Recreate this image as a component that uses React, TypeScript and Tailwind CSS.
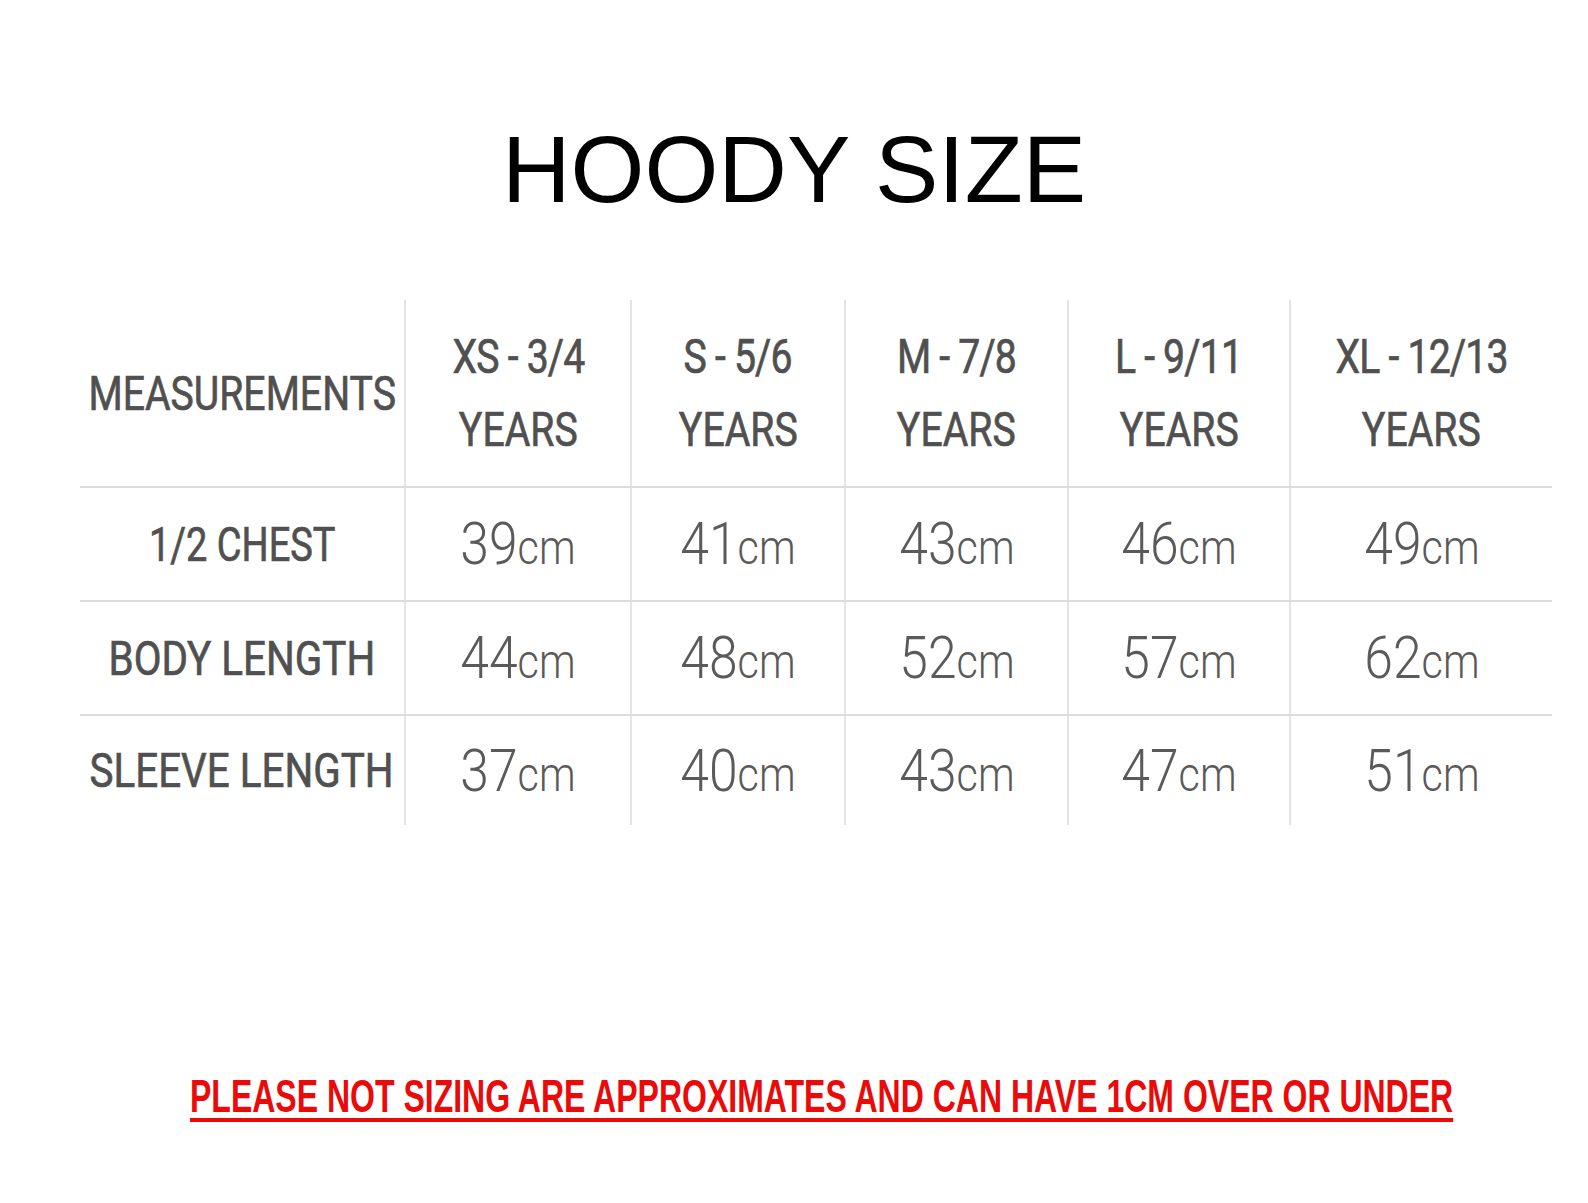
import React from "react";

const sizes: [string, string][] = [
  ["XS - 3/4", "YEARS"],
  ["S - 5/6", "YEARS"],
  ["M - 7/8", "YEARS"],
  ["L - 9/11", "YEARS"],
  ["XL - 12/13", "YEARS"],
];

const rows: { label: string; values: string[]; h: string; narrow: boolean }[] = [
  { label: "1/2 CHEST", values: ["39", "41", "43", "46", "49"], h: "h-[114px]", narrow: true },
  { label: "BODY LENGTH", values: ["44", "48", "52", "57", "62"], h: "h-[114px]", narrow: false },
  { label: "SLEEVE LENGTH", values: ["37", "40", "43", "47", "51"], h: "h-[111px]", narrow: false },
];

const colW = ["w-[226px]", "w-[214px]", "w-[223px]", "w-[222px]", "w-[263px]"];

function HeadText({ children }: { children: React.ReactNode }) {
  return (
    <span className="inline-block whitespace-nowrap scale-x-[0.8] font-['Roboto','Liberation_Sans',sans-serif] font-normal text-[49px] leading-[73px] text-[#505050] [-webkit-text-stroke:0.7px_#505050]">
      {children}
    </span>
  );
}

function Value({ n }: { n: string }) {
  return (
    <span className="inline-block whitespace-nowrap scale-x-[0.86] font-['Roboto','Liberation_Sans',sans-serif] font-light leading-none text-[#5a5a5a]">
      <span className="text-[60px]">{n}</span>
      <span className="text-[48px]">cm</span>
    </span>
  );
}

export default function App() {
  return (
    <div className="w-[1588px] h-[1203px] bg-white overflow-hidden">
      <div className="pt-[122px] text-center text-[95px] leading-none text-black font-['Liberation_Sans',Arial,sans-serif]">
        HOODY SIZE
      </div>

      <div className="mt-[83px] ml-[80px] w-[1472px]">
        <div className="flex h-[186px]">
          <div className="w-[324px] flex items-center justify-center">
            <HeadText>MEASUREMENTS</HeadText>
          </div>
          {sizes.map((s, i) => (
            <div
              key={i}
              className={`${colW[i]} border-l-2 border-[#e4e4e4] flex flex-col items-center justify-center`}
            >
              <HeadText>
                <span className="tracking-[-1px]">{s[0]}</span>
              </HeadText>
              <HeadText>{s[1]}</HeadText>
            </div>
          ))}
        </div>
        {rows.map((r, ri) => (
          <div key={ri} className={`flex ${r.h} border-t-2 border-[#dcdcdc]`}>
            <div className="w-[324px] flex items-center justify-center">
              <HeadText>
                {r.narrow ? (
                  <span className="inline-block scale-x-[0.97]">{r.label}</span>
                ) : (
                  <span className="inline-block scale-x-[1.03]">{r.label}</span>
                )}
              </HeadText>
            </div>
            {r.values.map((v, i) => (
              <div
                key={i}
                className={`${colW[i]} border-l-2 border-[#e4e4e4] flex items-center justify-center`}
              >
                <Value n={v} />
              </div>
            ))}
          </div>
        ))}
      </div>

      <div className="mt-[247px] pl-[190px]">
        <span className="inline-block origin-left scale-x-[0.681] whitespace-nowrap font-['Liberation_Sans',Arial,sans-serif] font-bold text-[47px] leading-none text-[#ea0a0a] underline decoration-4 underline-offset-[6px]">
          PLEASE NOT SIZING ARE APPROXIMATES AND CAN HAVE 1CM OVER OR UNDER
        </span>
      </div>
    </div>
  );
}
